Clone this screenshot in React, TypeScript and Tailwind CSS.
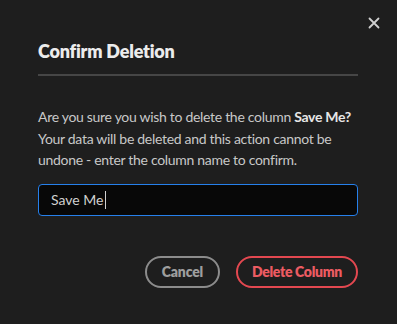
import React from "react";

export default function App() {
  return (
    <div className="w-[397px] h-[324px] bg-[#1e1e1e] relative overflow-hidden" style={{ fontFamily: "Lato, 'Noto Sans', sans-serif" }}>
      <button className="absolute left-[366px] top-[15px] w-[16px] h-[16px] flex items-center justify-center text-[#d0d0d0]">
        <svg width="12" height="12" viewBox="0 0 12 12" fill="none" stroke="currentColor" strokeWidth="1.8" strokeLinecap="round">
          <path d="M1.5 1.5 L10.5 10.5 M10.5 1.5 L1.5 10.5" />
        </svg>
      </button>
      <div className="pl-[38px] pr-[39px] pt-[39px] flex flex-col">
        <h2 className="text-[18px] leading-[24px] font-extrabold tracking-[-0.2px] text-[#ececec]">Confirm Deletion</h2>
        <div className="mt-[11px] h-[2px] bg-[#464646]" />
        <p className="mt-[30px] text-[14px] leading-[21.5px] tracking-[-0.3px] text-[#c8c8c8]">
          Are you sure you wish to delete the column <span className="font-bold text-[#e6e6e6]">Save Me?</span> Your data will be deleted and this action cannot be undone - enter the column name to confirm.
        </p>
        <div className="mt-[13px] h-[32px] rounded-[4px] border border-[#2680eb] bg-[#080808] flex items-center pl-[12px] text-[14px] text-[#d0d0d0]">
          Save Me<span className="inline-block w-[1px] h-[18px] bg-[#d0d0d0] ml-[1px]" />
        </div>
        <div className="mt-[40px] flex justify-end gap-[16px]">
          <button className="h-[32px] px-[15px] rounded-full border-2 border-[#8c8c8c] text-[14px] font-extrabold tracking-[-0.2px] text-[#9e9e9e]">Cancel</button>
          <button className="h-[32px] px-[14px] rounded-full border-2 border-[#e34850] text-[14px] font-extrabold tracking-[-0.3px] text-[#ec5b62]">Delete Column</button>
        </div>
      </div>
    </div>
  );
}
